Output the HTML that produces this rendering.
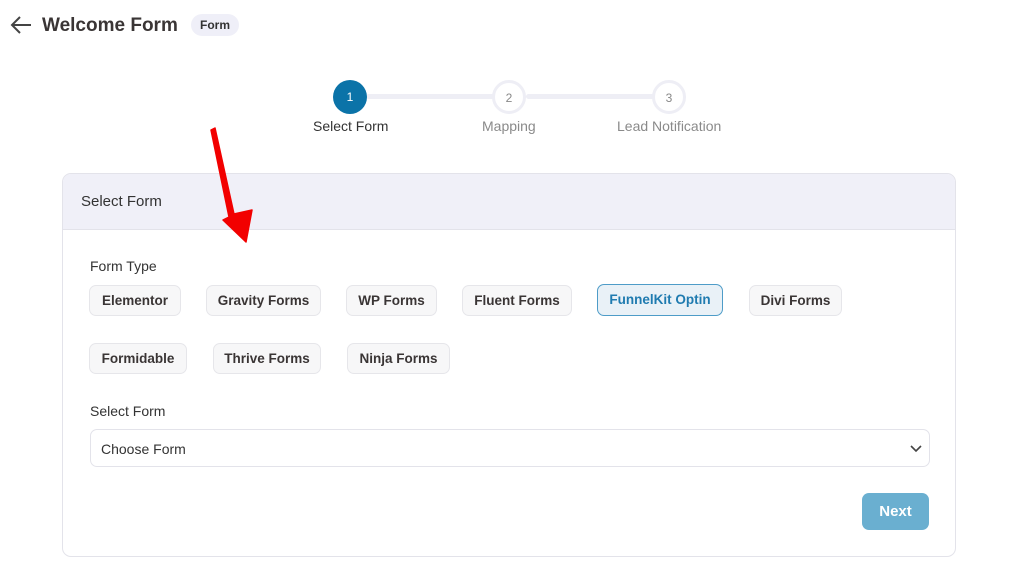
<!DOCTYPE html>
<html><head><meta charset="utf-8"><style>
*{box-sizing:border-box;margin:0;padding:0}
body{width:1024px;height:571px;background:#fff;font-family:"Liberation Sans",sans-serif;color:#353030;position:relative;overflow:hidden}
.a{position:absolute}
.btn{position:absolute;height:31px;border:1px solid #e6e6ea;background:#f7f7f8;border-radius:7px;font-size:13.5px;font-weight:bold;color:#3a3535;text-align:center;line-height:30px}
.step{position:absolute;width:34px;height:34px;border-radius:50%;text-align:center;line-height:30px;font-size:12px}
.lbl{position:absolute;font-size:14px;top:118px;white-space:nowrap}
</style></head><body>
<svg class="a" style="left:10px;top:15px" width="22" height="20" viewBox="0 0 22 20"><path d="M21 10H2M10 2L2 10l8 8" fill="none" stroke="#444" stroke-width="2"/></svg>
<div class="a" style="left:42px;top:15px;font-size:19px;font-weight:bold;color:#3a3535">Welcome Form</div>
<div class="a" style="left:191px;top:14px;width:48px;height:22px;border-radius:11px;background:#efeff8;font-size:12px;font-weight:bold;text-align:center;line-height:22px;color:#333">Form</div>

<div class="a" style="left:366px;top:94px;width:128px;height:5px;background:#eeeef5;border-radius:3px"></div>
<div class="a" style="left:526px;top:94px;width:128px;height:5px;background:#eeeef5;border-radius:3px"></div>
<div class="step" style="left:333px;top:80px;background:#0b73a8;color:#fff;line-height:34px">1</div>
<div class="step" style="left:492px;top:80px;border:3px solid #eeeef5;color:#888">2</div>
<div class="step" style="left:652px;top:80px;border:3px solid #eeeef5;color:#888">3</div>
<div class="lbl" style="left:313px;color:#333">Select Form</div>
<div class="lbl" style="left:482px;color:#8a8a8a">Mapping</div>
<div class="lbl" style="left:617px;color:#8a8a8a">Lead Notification</div>

<div class="a" style="left:62px;top:173px;width:894px;height:384px;border:1px solid #e3e3ea;border-radius:9px;overflow:hidden">
 <div style="height:56px;background:#f0f0f8;border-bottom:1px solid #e3e3ea;padding:19px 0 0 18px;font-size:15px;color:#333">Select Form</div>
</div>
<div class="a" style="left:90px;top:258px;font-size:14px;color:#333">Form Type</div>
<div class="btn" style="left:89px;top:285px;width:92px">Elementor</div>
<div class="btn" style="left:206px;top:285px;width:115px">Gravity Forms</div>
<div class="btn" style="left:346px;top:285px;width:91px">WP Forms</div>
<div class="btn" style="left:462px;top:285px;width:110px">Fluent Forms</div>
<div class="btn" style="left:597px;top:284px;width:126px;height:32px;background:#e9f1f7;border:1.5px solid #4e9cc8;color:#1f7bb0;line-height:30px">FunnelKit Optin</div>
<div class="btn" style="left:749px;top:285px;width:93px">Divi Forms</div>
<div class="btn" style="left:89px;top:343px;width:98px">Formidable</div>
<div class="btn" style="left:213px;top:343px;width:108px">Thrive Forms</div>
<div class="btn" style="left:347px;top:343px;width:103px">Ninja Forms</div>
<div class="a" style="left:90px;top:403px;font-size:14px;color:#333">Select Form</div>
<div class="a" style="left:90px;top:429px;width:840px;height:38px;border:1px solid #e3e3ea;border-radius:7px;font-size:14px;padding:11px 0 0 10px;color:#333">Choose Form</div>
<svg class="a" style="left:909px;top:444px" width="14" height="9" viewBox="0 0 14 9"><path d="M2 2l5 5 5-5" fill="none" stroke="#444" stroke-width="1.6"/></svg>
<div class="a" style="left:862px;top:493px;width:67px;height:37px;border-radius:7px;background:#6aafd0;color:#fff;font-weight:bold;font-size:15px;text-align:center;line-height:38px">Next</div>

<svg class="a" style="left:200px;top:120px" width="70" height="130" viewBox="0 0 70 130"><path d="M11 10L15 8L34 94L52 90L46 122L23 100L29 97Z" fill="#f20000" stroke="#f20000" stroke-width="1.5" stroke-linejoin="round"/></svg>
</body></html>
